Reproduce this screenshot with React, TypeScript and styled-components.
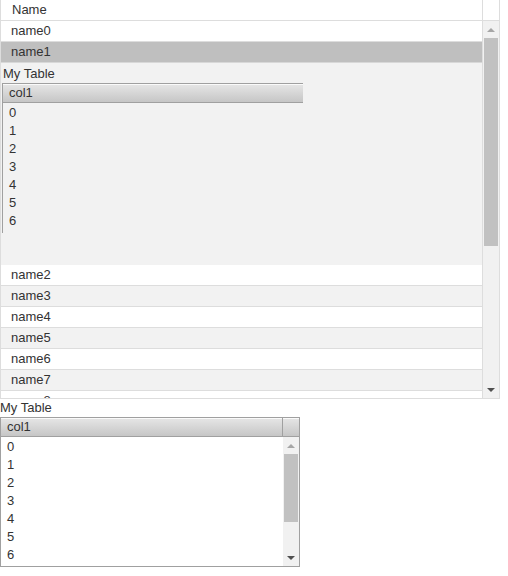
import styled, { createGlobalStyle } from "styled-components"

const NAMES = Array.from({ length: 9 }, (_, i) => `name${i}`)
const VALUES = Array.from({ length: 10 }, (_, i) => i)
const EXPANDED_INDEX = 1

const GlobalStyle = createGlobalStyle`
  body {
    margin: 0;
    background: #fff;
    font-family: "Liberation Sans", Arial, sans-serif;
    font-size: 13px;
    color: #333;
  }
`

interface ScrollBarProps {
  thumbSize: number
}

const ScrollBar = ({ thumbSize }: ScrollBarProps) => (
  <Track>
    <ArrowBox>
      <Arrow $dir="up" />
    </ArrowBox>
    <Thumb $size={thumbSize} />
    <TrackRest />
    <ArrowBox>
      <Arrow $dir="down" />
    </ArrowBox>
  </Track>
)

interface SubTableProps {
  embedded?: boolean
}

const SubTable = ({ embedded }: SubTableProps) => (
  <div>
    <Caption $embedded={embedded}>My Table</Caption>
    <SubFrame $embedded={embedded}>
      <SubHeader>
        <SubHeaderCell>col1</SubHeaderCell>
        {!embedded && <SubHeaderGutter />}
      </SubHeader>
      <SubBody $height={embedded ? 130 : 129}>
        <SubRows>
          {VALUES.map((v) => (
            <SubRow key={v}>{v}</SubRow>
          ))}
        </SubRows>
        {!embedded && (
          <SubGutter>
            <ScrollBar thumbSize={68} />
          </SubGutter>
        )}
      </SubBody>
    </SubFrame>
  </div>
)

export default function App() {
  return (
    <>
      <GlobalStyle />
      <Grid>
        <HeaderRow>
          <HeaderCell>Name</HeaderCell>
          <HeaderGutter />
        </HeaderRow>
        <Body>
          <Rows>
            {NAMES.map((name, i) => (
              <div key={name}>
                <Row $alt={i % 2 === 1} $selected={i === EXPANDED_INDEX}>
                  {name}
                </Row>
                {i === EXPANDED_INDEX && (
                  <Detail>
                    <SubTable embedded />
                  </Detail>
                )}
              </div>
            ))}
          </Rows>
          <Gutter>
            <ScrollBar thumbSize={208} />
          </Gutter>
        </Body>
      </Grid>
      <SubTable />
    </>
  )
}

const Grid = styled.div`
  width: 500px;
  box-sizing: border-box;
  border: 1px solid #ddd;
  border-top: none;
`

const HeaderRow = styled.div`
  display: grid;
  grid-template-columns: 1fr 17px;
  height: 21px;
  box-sizing: border-box;
  border-bottom: 1px solid #ddd;
  background: #fff;
`

const HeaderCell = styled.div`
  padding-left: 11px;
  line-height: 20px;
`

const HeaderGutter = styled.div`
  border-left: 1px solid #ddd;
`

const Body = styled.div`
  display: grid;
  grid-template-columns: 1fr 17px;
  height: 377px;
`

const Rows = styled.div`
  overflow: hidden;
`

const Row = styled.div<{ $alt: boolean; $selected: boolean }>`
  height: 21px;
  box-sizing: border-box;
  padding-left: 10px;
  line-height: 20px;
  border-bottom: 1px solid ${(p) => (p.$selected ? "#d8d8d8" : "#ddd")};
  background: ${(p) => (p.$selected ? "#bfbfbf" : p.$alt ? "#f2f2f2" : "#fff")};
`

const Detail = styled.div`
  height: 202px;
  box-sizing: border-box;
  padding: 2px 0 0 1px;
  background: #f2f2f2;
`

const Gutter = styled.div`
  display: flex;
  border-left: 1px solid #ddd;
`

const Track = styled.div`
  flex: 1;
  display: flex;
  flex-direction: column;
  background: #f1f1f1;
`

const ArrowBox = styled.div`
  height: 17px;
  flex: none;
  display: flex;
  align-items: center;
  justify-content: center;
`

const Arrow = styled.div<{ $dir: "up" | "down" }>`
  width: 0;
  height: 0;
  border-left: 4px solid transparent;
  border-right: 4px solid transparent;
  ${(p) =>
    p.$dir === "up"
      ? "border-bottom: 4px solid #a6a6a6;"
      : "border-top: 4px solid #505050;"}
`

const Thumb = styled.div<{ $size: number }>`
  flex: none;
  height: ${(p) => p.$size}px;
  margin: 0 1px;
  background: #c1c1c1;
`

const TrackRest = styled.div`
  flex: 1;
`

const Caption = styled.div<{ $embedded?: boolean }>`
  line-height: 18px;
  padding-left: ${(p) => (p.$embedded ? "1px" : "0")};
`

const SubFrame = styled.div<{ $embedded?: boolean }>`
  width: ${(p) => (p.$embedded ? "301px" : "300px")};
  box-sizing: border-box;
  border: 1px solid #a0a0a0;
  ${(p) => p.$embedded && "border-right: none; border-bottom: none;"}
  background: ${(p) => (p.$embedded ? "transparent" : "#fff")};
`

const SubHeader = styled.div`
  display: flex;
  height: 19px;
  box-sizing: border-box;
  border-bottom: 1px solid #a0a0a0;
  background: linear-gradient(#e6e6e6, #c6c6c6);
  box-shadow: inset 0 1px 0 #fafafa;
`

const SubHeaderCell = styled.div`
  flex: 1;
  padding-left: 6px;
  line-height: 18px;
`

const SubHeaderGutter = styled.div`
  width: 17px;
  box-sizing: border-box;
  border-left: 1px solid #a0a0a0;
`

const SubBody = styled.div<{ $height: number }>`
  display: flex;
  height: ${(p) => p.$height}px;
`

const SubRows = styled.div`
  flex: 1;
  overflow: hidden;
  padding-top: 1px;
`

const SubRow = styled.div`
  height: 18px;
  line-height: 18px;
  padding-left: 6px;
`

const SubGutter = styled.div`
  width: 16px;
  display: flex;
`
